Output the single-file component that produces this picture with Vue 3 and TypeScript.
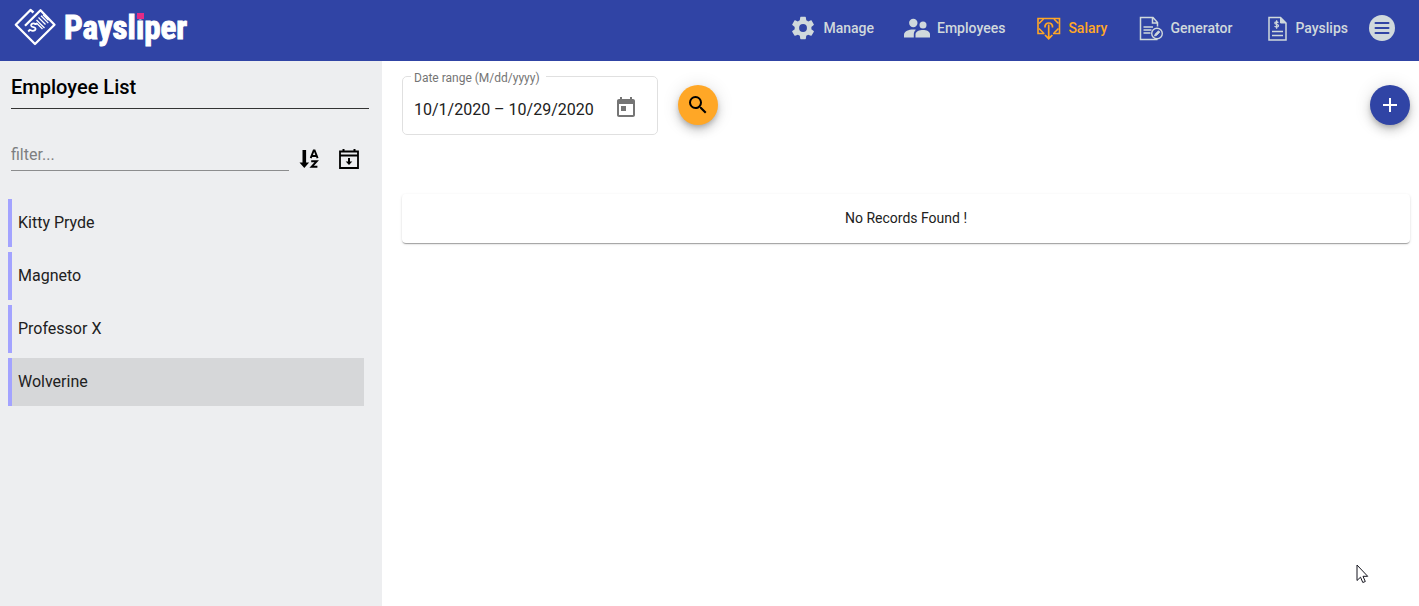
<script setup lang="ts">
import { computed, ref } from 'vue'

interface NavItem {
  label: string
  icon: 'manage' | 'employees' | 'salary' | 'generator' | 'payslips'
}

const navItems: NavItem[] = [
  { label: 'Manage', icon: 'manage' },
  { label: 'Employees', icon: 'employees' },
  { label: 'Salary', icon: 'salary' },
  { label: 'Generator', icon: 'generator' },
  { label: 'Payslips', icon: 'payslips' },
]
const activeNav = ref('Salary')

const employees = ref<string[]>(['Kitty Pryde', 'Magneto', 'Professor X', 'Wolverine'])
const selected = ref('Wolverine')
const filter = ref('')
const dateRange = ref('10/1/2020 – 10/29/2020')

const visibleEmployees = computed(() =>
  employees.value.filter((name) => name.toLowerCase().includes(filter.value.toLowerCase())),
)

function reverseOrder(): void {
  employees.value = [...employees.value].reverse()
}
</script>

<template>
  <div class="page">
    <header class="topbar">
      <a class="brand" href="#">
        <svg class="brand-mark" width="44" height="40" viewBox="0 0 44 40" fill="none" stroke="#fff" aria-hidden="true">
          <path d="M19.500 4.500 16.500 2 1.800 16.800 21 36 40.500 16.800 26.500 2.300 11 17.800" stroke-width="2.300" stroke-linejoin="round" />
          <path d="M24.500 9.500l7 7M27 7.800l7.300 7.300M22.500 12l8 8M29 6.800l5.500 5.500M22.500 15l6 6" stroke-width="1.300" />
          <path d="M21.500 16.500c-1.800-2-5-.8-4.300 1.300.7 1.900 3.700.7 4.300 2.600.6 2.300-3.500 3.300-5.500 1.300M23 15.200l-1.500 1.500M16.200 21.500l-2 2" stroke-width="1.800" />
        </svg>
        <span class="wordmark">Paysl<span class="dot">i</span>per</span>
      </a>
      <nav class="nav" aria-label="Main">
        <a
          v-for="item in navItems"
          :key="item.label"
          href="#"
          class="nav-link"
          :class="{ active: item.label === activeNav }"
          @click.prevent="activeNav = item.label"
        >
          <svg class="nav-icon" width="26" height="26" viewBox="0 0 26 26" fill="none" stroke="currentColor" aria-hidden="true">
            <path
              v-if="item.icon === 'manage'"
              transform="translate(-.4 -.4) scale(1.120)"
              fill="currentColor"
              stroke="none"
              d="M19.430 12.980c.04-.32.07-.64.07-.98s-.03-.66-.07-.98l2.110-1.650c.19-.15.24-.42.12-.64l-2-3.460c-.12-.22-.39-.3-.61-.22l-2.490 1c-.52-.4-1.080-.73-1.690-.98l-.38-2.650C14.460 2.180 14.250 2 14 2h-4c-.25 0-.46.18-.49.42l-.38 2.650c-.61.25-1.170.59-1.690.98l-2.490-1c-.23-.09-.49 0-.61.22l-2 3.460c-.13.22-.07.49.12.64l2.110 1.650c-.04.32-.07.65-.07.98s.03.66.07.98l-2.110 1.650c-.19.15-.24.42-.12.64l2 3.460c.12.22.39.3.61.22l2.490-1c.52.4 1.080.73 1.690.98l.38 2.650c.03.24.24.42.49.42h4c.25 0 .46-.18.49-.42l.38-2.650c.61-.25 1.170-.59 1.690-.98l2.490 1c.23.09.49 0 .61-.22l2-3.460c.12-.22.07-.49-.12-.64l-2.110-1.650zM12 15.500a3.500 3.500 0 1 1 0-7 3.500 3.500 0 0 1 0 7z"
            />
            <g v-else-if="item.icon === 'employees'" fill="currentColor" stroke="none">
              <circle cx="9.300" cy="8" r="4.200" />
              <circle cx="19" cy="10" r="3.500" />
              <path d="M0 22.500V20c0-4 5-5.500 9-5.500 1 0 2 .1 3 .3-1.700 1.300-2.200 3-2.200 5v2.700z" />
              <path d="M11.500 22.500v-3c0-3.300 4-4.500 7.500-4.500s7 1.200 7 4.500v3z" />
            </g>
            <g v-else-if="item.icon === 'salary'">
              <path d="M9.500 18.500H3V3.500h21.500v15H18" stroke-width="1.600" />
              <path d="M4 8.500 8.500 4M19 4l4.500 4.500M4 13.500l4.500 4.500M23.500 13.500 19 18" stroke-width="1.600" />
              <path d="M10 12.500c-.8-6 8.300-6 7.500 0M13.700 9.500V23M10 20l3.700 3.700 3.700-3.700" stroke-width="1.700" />
            </g>
            <g v-else-if="item.icon === 'generator'">
              <path d="M20.500 11.500V7.500L16 2.500H3.500v22h17M15.500 3v5h5" stroke-width="1.500" />
              <path d="M6.500 12h9.500M6.500 15h8M6.500 18h7" stroke-width="1.300" />
              <circle cx="20" cy="18.500" r="5.300" stroke-width="1.400" />
              <path d="m17.500 21 .7-2 3.300-3.300 1.400 1.400-3.300 3.300z" fill="currentColor" stroke-width=".8" />
            </g>
            <g v-else>
              <path d="M7 2.500h11.500l5.500 5.500v17H7z" stroke-width="1.500" />
              <path d="M18.500 3v5H24z" fill="currentColor" />
              <path d="M10 16.500h11M10 20.500h11" stroke-width="1.500" />
              <path d="M16.300 7.800c-.8-1.500-3.500-1.200-3.500.3 0 1.900 3.700.8 3.700 2.700 0 1.500-3 1.700-3.900.2M14.600 5.300v8.500" stroke-width="1.300" />
            </g>
          </svg>
          <span>{{ item.label }}</span>
        </a>
      </nav>
      <button class="menu" type="button" aria-label="Menu">
        <svg width="26" height="26" viewBox="0 0 26 26" aria-hidden="true">
          <circle cx="13" cy="13" r="13" fill="#d0d9dc" />
          <path d="M6.500 8h13M6.500 13h13M6.500 18h13" stroke="#3044a5" stroke-width="2" stroke-linecap="round" />
        </svg>
      </button>
    </header>

    <div class="body">
      <aside class="sidebar">
        <h1 class="title">Employee List</h1>
        <div class="filter-row">
          <input v-model="filter" class="filter" type="text" placeholder="filter..." aria-label="Filter employees" />
          <button class="icon-button" type="button" aria-label="Sort by name" @click="reverseOrder">
            <svg width="24" height="24" viewBox="0 0 24 24" aria-hidden="true">
              <path d="M5.500 3h3.600v12.500h3L7.300 21l-4.800-5.500h3z" />
              <path d="m13.700 11.200 3-7.700h.9l3 7.700M14.700 9h5M14.200 14.200h5.600l-5.200 5.600h5.800" fill="none" stroke="#000" stroke-width="1.900" />
            </svg>
          </button>
          <button class="icon-button" type="button" aria-label="Sort by date">
            <svg width="24" height="24" viewBox="0 0 24 24" fill="none" stroke="#000" aria-hidden="true">
              <path d="M3 4.500h18V21H3zM3 8.500h18" stroke-width="1.800" />
              <path d="M6.500 2v3M17.500 2v3M12 11v5" stroke-width="2" />
              <path d="M8.700 14.500h6.600L12 18z" fill="#000" stroke="none" />
            </svg>
          </button>
        </div>
        <ul class="employees">
          <li v-for="name in visibleEmployees" :key="name">
            <button
              type="button"
              class="employee"
              :class="{ selected: name === selected }"
              @click="selected = name"
            >
              {{ name }}
            </button>
          </li>
        </ul>
      </aside>

      <main class="content">
        <div class="toolbar">
          <fieldset class="date-field">
            <legend><label for="date-range">Date range (M/dd/yyyy)</label></legend>
            <div class="date-row">
              <input id="date-range" v-model="dateRange" class="date-input" type="text" />
              <button class="icon-button" type="button" aria-label="Open calendar">
                <svg width="24" height="24" viewBox="0 0 24 24" fill="#757575" aria-hidden="true">
                  <path d="M19 3h-1V1h-2v2H8V1H6v2H5c-1.110 0-2 .9-2 2v14c0 1.100.89 2 2 2h14c1.100 0 2-.9 2-2V5c0-1.100-.9-2-2-2zm0 16H5V8h14v11zM7 10h5v5H7z" />
                </svg>
              </button>
            </div>
          </fieldset>
          <button class="fab search" type="button" aria-label="Search">
            <svg width="24" height="24" viewBox="0 0 24 24" aria-hidden="true">
              <path d="M15.500 14h-.79l-.28-.27A6.471 6.471 0 0 0 16 9.500 6.500 6.500 0 1 0 9.500 16c1.610 0 3.090-.59 4.230-1.570l.27.28v.79l5 4.990L20.490 19l-4.990-5zm-6 0C7.010 14 5 11.990 5 9.500S7.010 5 9.500 5 14 7.010 14 9.500 11.990 14 9.500 14z" />
            </svg>
          </button>
          <button class="fab add" type="button" aria-label="Add record">
            <svg width="24" height="24" viewBox="0 0 24 24" fill="#fff" aria-hidden="true">
              <path d="M19 13h-6v6h-2v-6H5v-2h6V5h2v6h6v2z" />
            </svg>
          </button>
        </div>
        <p class="card">No Records Found !</p>
      </main>
    </div>

    <svg class="pointer" width="13" height="20" viewBox="0 0 13 20" aria-hidden="true">
      <path d="M1 1v15.500l3.500-3.300 2.300 5.300 2.500-1-2.300-5.200h4.700z" fill="#fff" stroke="#15151f" stroke-width="1" />
    </svg>
  </div>
</template>

<style>
body {
  margin: 0;
}
</style>

<style scoped>
.page {
  display: flex;
  flex-direction: column;
  min-height: 100vh;
  background: #fff;
  color: #212121;
  font-family: Roboto, "Liberation Sans", sans-serif;
  font-size: 16px;
}

.page * {
  box-sizing: border-box;
}

button {
  padding: 0;
  border: 0;
  background: none;
  color: inherit;
  font: inherit;
  cursor: pointer;
}

svg {
  display: block;
}

.topbar {
  display: flex;
  align-items: center;
  height: 61px;
  padding: 0 24px 5px 14px;
  background: #3044a5;
}

.brand {
  display: flex;
  align-items: center;
  gap: 6px;
  margin-right: auto;
  color: #fff;
  text-decoration: none;
}

.wordmark {
  font-family: "Roboto Condensed", "Liberation Sans Narrow", "Liberation Sans", sans-serif;
  font-size: 33px;
  font-weight: 700;
  line-height: 40px;
  -webkit-text-stroke: 1px #fff;
}

.dot {
  position: relative;
}

.dot::after {
  content: "";
  position: absolute;
  top: 5px;
  left: 1px;
  width: 7px;
  height: 6px;
  background: #e42b86;
}

.nav {
  display: flex;
  gap: 30px;
}

.nav-link {
  display: flex;
  align-items: center;
  gap: 7px;
  color: #d0d9dc;
  font-size: 14px;
  font-weight: 500;
  line-height: 20px;
  text-decoration: none;
}

.nav-link.active {
  color: #ffa726;
}

.menu {
  margin-left: 21px;
}

.body {
  display: flex;
  flex: 1;
}

.sidebar {
  flex: 0 0 382px;
  padding: 10px 13px 0 8px;
  background: #edeef0;
}

.title {
  margin: 0 0 0 3px;
  padding-bottom: 5px;
  border-bottom: 1px solid #333;
  color: #000;
  font-size: 20px;
  font-weight: 500;
  line-height: 32px;
}

.filter-row {
  display: flex;
  align-items: flex-end;
  gap: 16px;
  margin: 30px 8px 28px 3px;
}

.filter {
  flex: 1;
  min-width: 0;
  height: 32px;
  margin-right: -8px;
  padding: 0;
  border: 0;
  border-bottom: 1px solid #8c8d8e;
  outline: 0;
  background: transparent;
  font: inherit;
}

.filter::placeholder {
  color: #7d7e80;
}

.employees {
  display: flex;
  flex-direction: column;
  gap: 5px;
  margin: 0 5px 0 0;
  padding: 0;
  list-style: none;
}

.employee {
  display: block;
  width: 100%;
  height: 48px;
  padding: 0 0 2px 6px;
  border-left: 4px solid #a3a3ff;
  text-align: left;
}

.employee.selected {
  background: #d6d7d9;
}

.content {
  flex: 1;
  min-width: 0;
  padding: 6px 9px 0 20px;
}

.toolbar {
  display: flex;
  align-items: flex-end;
}

.date-field {
  width: 256px;
  height: 68px;
  min-width: 0;
  margin: 0;
  padding: 0 19px 0 8px;
  border: 1px solid #e0e0e0;
  border-radius: 5px;
}

.date-field legend {
  padding: 4px 6px 0 3px;
  color: #757575;
  font-size: 12px;
  line-height: 14px;
}

.date-row {
  display: flex;
  align-items: center;
  height: 46px;
}

.date-input {
  flex: 1;
  min-width: 0;
  height: 26px;
  padding: 2px 3px 0;
  border: 0;
  outline: 0;
  background: transparent;
  color: #212121;
  font: inherit;
}

.fab {
  display: flex;
  align-items: center;
  justify-content: center;
  width: 40px;
  height: 40px;
  margin-bottom: 10px;
  border-radius: 50%;
  box-shadow: 0 3px 5px -1px rgba(0, 0, 0, 0.2), 0 6px 10px rgba(0, 0, 0, 0.14), 0 1px 18px rgba(0, 0, 0, 0.12);
}

.search {
  margin-left: 20px;
  background: #ffa726;
}

.add {
  margin-left: auto;
  background: #3044a5;
}

.card {
  margin: 59px 0 0;
  padding: 15px;
  border-radius: 4px;
  box-shadow: 0 2px 1px -1px rgba(0, 0, 0, 0.2), 0 1px 1px rgba(0, 0, 0, 0.14), 0 1px 3px rgba(0, 0, 0, 0.12);
  font-size: 14px;
  line-height: 19px;
  text-align: center;
}

.pointer {
  position: fixed;
  right: 50px;
  bottom: 22px;
  pointer-events: none;
}
</style>
